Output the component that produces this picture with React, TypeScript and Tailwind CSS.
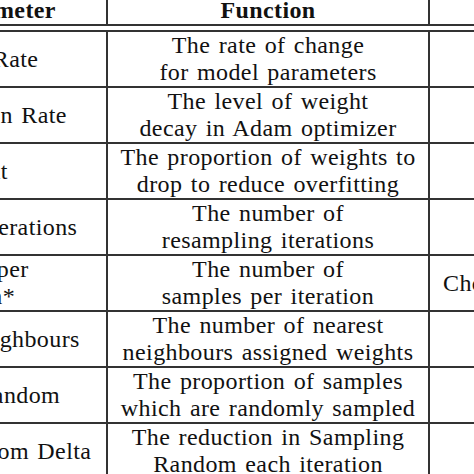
import React from "react";

interface Fila {
  param: string[];
  fn: string[];
  extra?: string;
}

const filas: Fila[] = [
  { param: ["Learning Rate"], fn: ["The rate of change", "for model parameters"] },
  { param: ["Regularization Rate"], fn: ["The level of weight", "decay in Adam optimizer"] },
  { param: ["Dropout"], fn: ["The proportion of weights to", "drop to reduce overfitting"] },
  { param: ["Resampling Iterations"], fn: ["The number of", "resampling iterations"] },
  { param: ["Samples per", "Iteration*"], fn: ["The number of", "samples per iteration"], extra: "Chosen via" },
  { param: ["K Nearest Neighbours"], fn: ["The number of nearest", "neighbours assigned weights"] },
  { param: ["Sampling Random"], fn: ["The proportion of samples", "which are randomly sampled"] },
  { param: ["Sampling Random Delta"], fn: ["The reduction in Sampling", "Random each iteration"] },
];

const Lineas: React.FC<{ lines: string[] }> = ({ lines }) => (
  <div className="flex flex-col items-center">
    {lines.map((l, i) => (
      <span key={i} className="whitespace-nowrap">
        {l}
      </span>
    ))}
  </div>
);

export default function App() {
  return (
    <div className="w-[474px] h-[474px] overflow-hidden bg-white text-[#111] font-['Liberation_Serif','Times_New_Roman',serif] text-[24px] leading-[27px] tracking-[0.4px] [word-spacing:2px]">
      <div className="ml-[-173px] mt-[-4px] w-[820px]">
        {/* encabezado */}
        <div className="flex h-[30px] border-b-2 border-[#333] font-bold">
          <div className="w-[281px] border-r-2 border-[#333] flex items-center justify-center">
            Hyperparameter
          </div>
          <div className="w-[322px] border-r-2 border-[#333] flex items-center justify-center">
            Function
          </div>
          <div className="flex-1" />
        </div>
        <div className="h-[4px]" />
        <div className="border-t-2 border-[#333]">
          {filas.map((f, idx) => (
            <div key={idx} className="flex h-[56px] border-b-2 border-[#333]">
              <div className="w-[281px] border-r-2 border-[#333] flex items-center justify-center">
                <Lineas lines={f.param} />
              </div>
              <div className="w-[322px] border-r-2 border-[#333] flex items-center justify-center">
                <Lineas lines={f.fn} />
              </div>
              <div className="flex-1 flex items-center pl-[13px] whitespace-nowrap">
                {f.extra}
              </div>
            </div>
          ))}
        </div>
      </div>
    </div>
  );
}
